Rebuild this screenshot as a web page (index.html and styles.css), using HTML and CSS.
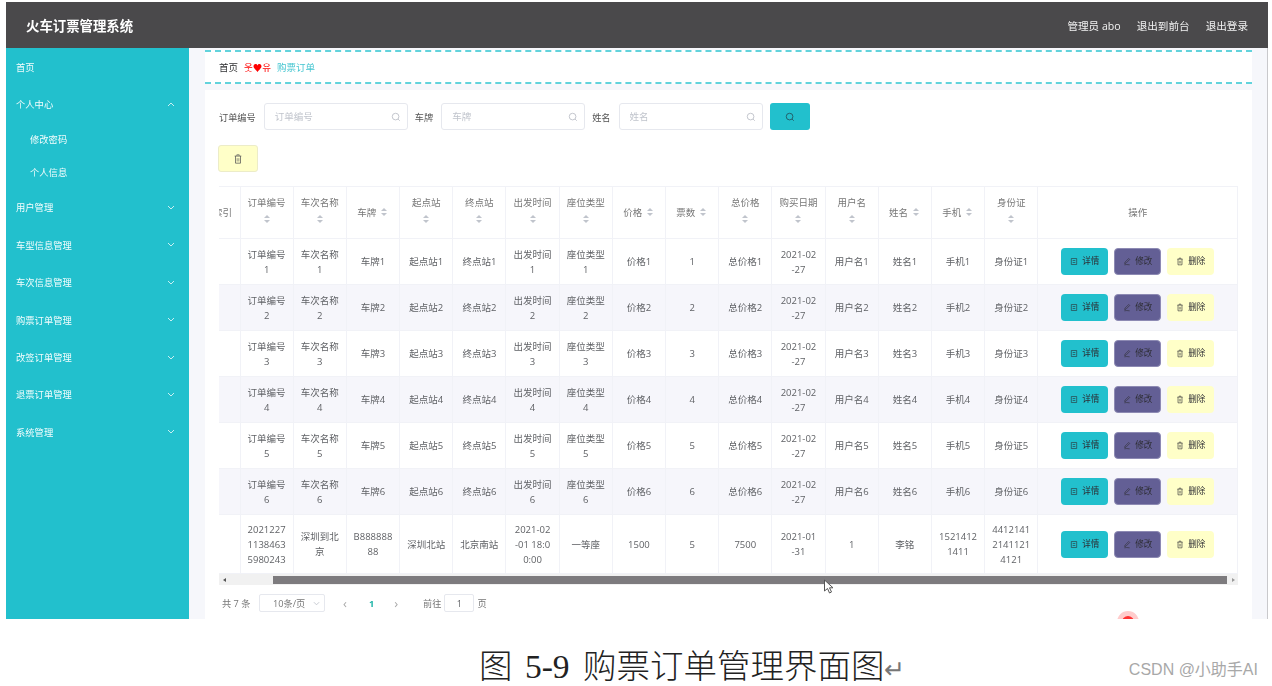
FILE: index.html
```html
<!DOCTYPE html>
<html>
<head>
    <title>火车订票管理系统</title>
    <link rel="stylesheet" href="styles.css">
</head>
<body>

<svg class="icon-defs" width="0" height="0">
    <symbol id="i-search" viewBox="0 0 12 12"><circle cx="5.5" cy="5.5" r="4" fill="none" stroke="currentColor"/><path d="M8.5 8.5L10.5 10.5" stroke="currentColor" fill="none"/></symbol>
    <symbol id="i-trash" viewBox="0 0 12 12"><path d="M4.5 2V1h3v1M2 2.500h8M3 2.500v8.500h6V2.500" stroke="currentColor" stroke-width=".9" fill="none"/><path d="M5 5v4M7 5v4" stroke="currentColor" stroke-width=".7" fill="none"/></symbol>
    <symbol id="i-doc" viewBox="0 0 12 12"><path d="M2 1.500h8v9H2zM4 4.500h4M4 7.500h4" stroke="currentColor" stroke-width=".9" fill="none"/></symbol>
    <symbol id="i-edit" viewBox="0 0 12 12"><path d="M8.500 1.500L10 3L4.500 8.500L2.500 9L3 7zM2 11c2-.6 5-.6 8 0" stroke="currentColor" stroke-width=".9" fill="none"/></symbol>
    <symbol id="i-down" viewBox="0 0 8 5"><path d="M1 1l3 3 3-3" stroke="currentColor" fill="none"/></symbol>
    <symbol id="i-up" viewBox="0 0 8 5"><path d="M1 4l3-3 3 3" stroke="currentColor" fill="none"/></symbol>
</svg>

<div class="screen">
    <header class="topbar">
        <div class="title">火车订票管理系统</div>
        <div class="top-links">
            <span>管理员 abo</span>
            <span>退出到前台</span>
            <span>退出登录</span>
        </div>
    </header>

    <div class="layout">
        <nav class="sidebar">
            <div class="menu-item">首页</div>
            <div class="menu-item">个人中心<svg class="chev"><use href="#i-up"/></svg></div>
            <div class="menu-sub">修改密码</div>
            <div class="menu-sub">个人信息</div>
            <div class="menu-item">用户管理<svg class="chev"><use href="#i-down"/></svg></div>
            <div class="menu-item">车型信息管理<svg class="chev"><use href="#i-down"/></svg></div>
            <div class="menu-item">车次信息管理<svg class="chev"><use href="#i-down"/></svg></div>
            <div class="menu-item">购票订单管理<svg class="chev"><use href="#i-down"/></svg></div>
            <div class="menu-item">改签订单管理<svg class="chev"><use href="#i-down"/></svg></div>
            <div class="menu-item">退票订单管理<svg class="chev"><use href="#i-down"/></svg></div>
            <div class="menu-item">系统管理<svg class="chev"><use href="#i-down"/></svg></div>
        </nav>

        <main class="main">
            <div class="breadcrumb">
                <span class="crumb-home">首页</span>
                <span class="crumb-sep">웃♥유</span>
                <span class="crumb-current">购票订单</span>
            </div>

            <div class="panel">
                <div class="search-row">
                    <label class="search-label">订单编号</label>
                    <div class="search-box"><input type="text" placeholder="订单编号"><svg class="search-icon"><use href="#i-search"/></svg></div>
                    <label class="search-label">车牌</label>
                    <div class="search-box"><input type="text" placeholder="车牌"><svg class="search-icon"><use href="#i-search"/></svg></div>
                    <label class="search-label">姓名</label>
                    <div class="search-box"><input type="text" placeholder="姓名"><svg class="search-icon"><use href="#i-search"/></svg></div>
                    <button class="search-btn"><svg class="btn-icon"><use href="#i-search"/></svg></button>
                </div>

                <button class="bulk-delete"><svg class="btn-icon"><use href="#i-trash"/></svg></button>

                <table class="orders">
                    <colgroup>
                        <col class="col-index">
                        <col span="15" class="col-data">
                        <col class="col-actions">
                    </colgroup>
                    <thead>
                        <tr>
                            <th class="index-cell"><span>索引</span></th>
                            <th>订单编号 <i class="caret"></i></th>
                            <th>车次名称 <i class="caret"></i></th>
                            <th>车牌 <i class="caret"></i></th>
                            <th>起点站 <i class="caret"></i></th>
                            <th>终点站 <i class="caret"></i></th>
                            <th>出发时间 <i class="caret"></i></th>
                            <th>座位类型 <i class="caret"></i></th>
                            <th>价格 <i class="caret"></i></th>
                            <th>票数 <i class="caret"></i></th>
                            <th>总价格 <i class="caret"></i></th>
                            <th>购买日期 <i class="caret"></i></th>
                            <th>用户名 <i class="caret"></i></th>
                            <th>姓名 <i class="caret"></i></th>
                            <th>手机 <i class="caret"></i></th>
                            <th>身份证 <i class="caret"></i></th>
                            <th>操作</th>
                        </tr>
                    </thead>
                    <tbody>
                        <tr>
                            <td></td><td>订单编号 1</td><td>车次名称 1</td><td>车牌1</td><td>起点站1</td><td>终点站1</td><td>出发时间 1</td><td>座位类型 1</td><td>价格1</td><td>1</td><td>总价格1</td><td>2021-02<br>-27</td><td>用户名1</td><td>姓名1</td><td>手机1</td><td>身份证1</td>
                            <td><div class="actions"><button class="act act-view"><svg class="act-icon"><use href="#i-doc"/></svg>详情</button><button class="act act-edit"><svg class="act-icon"><use href="#i-edit"/></svg>修改</button><button class="act act-del"><svg class="act-icon"><use href="#i-trash"/></svg>删除</button></div></td>
                        </tr>
                        <tr>
                            <td></td><td>订单编号 2</td><td>车次名称 2</td><td>车牌2</td><td>起点站2</td><td>终点站2</td><td>出发时间 2</td><td>座位类型 2</td><td>价格2</td><td>2</td><td>总价格2</td><td>2021-02<br>-27</td><td>用户名2</td><td>姓名2</td><td>手机2</td><td>身份证2</td>
                            <td><div class="actions"><button class="act act-view"><svg class="act-icon"><use href="#i-doc"/></svg>详情</button><button class="act act-edit"><svg class="act-icon"><use href="#i-edit"/></svg>修改</button><button class="act act-del"><svg class="act-icon"><use href="#i-trash"/></svg>删除</button></div></td>
                        </tr>
                        <tr>
                            <td></td><td>订单编号 3</td><td>车次名称 3</td><td>车牌3</td><td>起点站3</td><td>终点站3</td><td>出发时间 3</td><td>座位类型 3</td><td>价格3</td><td>3</td><td>总价格3</td><td>2021-02<br>-27</td><td>用户名3</td><td>姓名3</td><td>手机3</td><td>身份证3</td>
                            <td><div class="actions"><button class="act act-view"><svg class="act-icon"><use href="#i-doc"/></svg>详情</button><button class="act act-edit"><svg class="act-icon"><use href="#i-edit"/></svg>修改</button><button class="act act-del"><svg class="act-icon"><use href="#i-trash"/></svg>删除</button></div></td>
                        </tr>
                        <tr>
                            <td></td><td>订单编号 4</td><td>车次名称 4</td><td>车牌4</td><td>起点站4</td><td>终点站4</td><td>出发时间 4</td><td>座位类型 4</td><td>价格4</td><td>4</td><td>总价格4</td><td>2021-02<br>-27</td><td>用户名4</td><td>姓名4</td><td>手机4</td><td>身份证4</td>
                            <td><div class="actions"><button class="act act-view"><svg class="act-icon"><use href="#i-doc"/></svg>详情</button><button class="act act-edit"><svg class="act-icon"><use href="#i-edit"/></svg>修改</button><button class="act act-del"><svg class="act-icon"><use href="#i-trash"/></svg>删除</button></div></td>
                        </tr>
                        <tr>
                            <td></td><td>订单编号 5</td><td>车次名称 5</td><td>车牌5</td><td>起点站5</td><td>终点站5</td><td>出发时间 5</td><td>座位类型 5</td><td>价格5</td><td>5</td><td>总价格5</td><td>2021-02<br>-27</td><td>用户名5</td><td>姓名5</td><td>手机5</td><td>身份证5</td>
                            <td><div class="actions"><button class="act act-view"><svg class="act-icon"><use href="#i-doc"/></svg>详情</button><button class="act act-edit"><svg class="act-icon"><use href="#i-edit"/></svg>修改</button><button class="act act-del"><svg class="act-icon"><use href="#i-trash"/></svg>删除</button></div></td>
                        </tr>
                        <tr>
                            <td></td><td>订单编号 6</td><td>车次名称 6</td><td>车牌6</td><td>起点站6</td><td>终点站6</td><td>出发时间 6</td><td>座位类型 6</td><td>价格6</td><td>6</td><td>总价格6</td><td>2021-02<br>-27</td><td>用户名6</td><td>姓名6</td><td>手机6</td><td>身份证6</td>
                            <td><div class="actions"><button class="act act-view"><svg class="act-icon"><use href="#i-doc"/></svg>详情</button><button class="act act-edit"><svg class="act-icon"><use href="#i-edit"/></svg>修改</button><button class="act act-del"><svg class="act-icon"><use href="#i-trash"/></svg>删除</button></div></td>
                        </tr>
                        <tr class="row-tall">
                            <td></td><td>20212271138463 5980243</td><td>深圳到北京</td><td>B88888888</td><td>深圳北站</td><td>北京南站</td><td>2021-02<br>-01 18:0<br>0:00</td><td>一等座</td><td>1500</td><td>5</td><td>7500</td><td>2021-01<br>-31</td><td>1</td><td>李铭</td><td>15214121411</td><td>441214121411214121</td>
                            <td><div class="actions"><button class="act act-view"><svg class="act-icon"><use href="#i-doc"/></svg>详情</button><button class="act act-edit"><svg class="act-icon"><use href="#i-edit"/></svg>修改</button><button class="act act-del"><svg class="act-icon"><use href="#i-trash"/></svg>删除</button></div></td>
                        </tr>
                    </tbody>
                </table>

                <div class="scrollbar">
                    <span class="scroll-left"></span>
                    <span class="scroll-thumb"></span>
                    <span class="scroll-right"></span>
                </div>

                <div class="pager">
                    <span class="pager-total">共 7 条</span>
                    <div class="pager-size">10条/页<svg class="pager-chev"><use href="#i-down"/></svg></div>
                    <span class="pager-prev">‹</span>
                    <span class="pager-num">1</span>
                    <span class="pager-next">›</span>
                    <span class="pager-goto">前往</span>
                    <input class="pager-input" type="text" value="1">
                    <span>页</span>
                </div>
            </div>
        </main>
    </div>

    <span class="rec-dot"></span>
    <svg class="cursor" width="12" height="16" viewBox="0 0 12 16"><path d="M1.500 1v11l3-2.500 2 4.500 2-1-2-4.200h3.500z" fill="#fff" stroke="#555"/></svg>
</div>

<footer class="caption-row">
    <div class="caption">图 <span class="caption-no">5-9</span> 购票订单管理界面图<span class="return-mark">↵</span></div>
    <div class="watermark">CSDN @小助手AI</div>
</footer>

</body>
</html>
```

FILE: styles.css
```css
body { margin: 0; background: #fff; font-family: "Open Sans", "Noto Sans CJK SC", "Noto Sans CJK KR", sans-serif; font-size: 9.5px; color: #606266; }
.icon-defs { display: block; height: 0; }

.screen { position: relative; width: 1262px; height: 617px; margin: 2px 0 0 6px; overflow: hidden; filter: blur(0.55px); }

.topbar { display: flex; justify-content: space-between; align-items: center; height: 46px; padding: 0 20px; background: #4a494b; color: #f2f2f2; }
.title { font-size: 13.4px; font-weight: 700; color: #fff; }
.top-links { display: flex; gap: 16px; font-size: 10.6px; }

.layout { display: flex; height: 571px; }

.sidebar { width: 183px; flex: none; background: #22c0cd; color: #f4fdfd; font-size: 9.3px; }
.menu-item { display: flex; justify-content: space-between; align-items: center; height: 37.4px; padding: 0 14px 0 10px; }
.menu-sub { display: flex; align-items: center; height: 33px; padding-left: 24px; }
.chev { width: 8px; height: 5px; color: #c9eff2; }

.main { flex: 1; min-width: 0; padding: 0 15px 0 16px; background: #f6f7fb; border-right: 1px solid #c9c9cc; }
.breadcrumb { display: flex; align-items: center; gap: 6px; height: 34px; margin-top: 2px; padding-left: 14px; box-sizing: border-box; background: #fff; border-top: 2px dashed #62d3dc; border-bottom: 2px dashed #62d3dc; }
.crumb-home { color: #303133; }
.crumb-sep { color: #f00; }
.crumb-current { color: #45c6d1; }

.panel { height: 529px; margin-top: 6px; padding: 13px 14px 0; box-sizing: border-box; background: #fff; }

.search-row { display: flex; align-items: center; height: 27px; }
.search-label { margin-right: 8px; font-size: 9.2px; color: #555; }
.search-box { display: flex; align-items: center; width: 144px; height: 27px; margin-right: 7px; padding: 0 6px 0 10px; box-sizing: border-box; border: 1px solid #e6e8ee; border-radius: 3px; }
.search-box input { flex: 1; min-width: 0; border: 0; padding: 0; outline: 0; font: inherit; }
.search-box input::placeholder { color: #c0c4cc; }
.search-icon { width: 10px; height: 10px; color: #b8bcc4; }
.search-btn { display: flex; justify-content: center; align-items: center; width: 40px; height: 27px; padding: 0; background: #22c0cd; border: 0; border-radius: 3px; color: #22505a; }
.btn-icon { width: 10px; height: 10px; }

.bulk-delete { display: flex; justify-content: center; align-items: center; width: 40px; height: 27px; margin: 15px 0 14px -1px; padding: 0; background: #ffffc8; border: 1px solid #ececc8; border-radius: 3px; color: #555; }

.orders { width: 1019px; table-layout: fixed; border-collapse: collapse; }
.col-index { width: 21px; }
.col-data { width: 53.2px; }
.col-actions { width: 200px; }
.orders th, .orders td { padding: 0 6.5px; border: 1px solid #f1f2f7; border-left: 0; text-align: center; word-break: break-all; line-height: 15px; font-weight: 400; overflow: hidden; }
.orders th { height: 52px; box-sizing: border-box; color: #777; }
.orders td { height: 46px; box-sizing: border-box; }
.orders tbody tr:nth-child(even) td { background: #f6f6fb; }
.orders .row-tall td { height: 59px; }
.orders th.index-cell { padding: 0; text-align: left; }
.index-cell span { display: block; margin-left: -6px; white-space: nowrap; }

.caret { position: relative; display: inline-block; width: 10px; height: 20px; vertical-align: middle; }
.caret::before, .caret::after { content: ""; position: absolute; left: 2px; border-left: 3px solid transparent; border-right: 3px solid transparent; }
.caret::before { top: 5px; border-bottom: 3.500px solid #c0c4cc; }
.caret::after { top: 10px; border-top: 3.500px solid #c0c4cc; }

.actions { display: flex; justify-content: center; gap: 6px; }
.act { display: flex; justify-content: center; align-items: center; gap: 4px; width: 47px; height: 27px; padding: 0; border: 1px solid transparent; border-radius: 4px; font: inherit; font-size: 8.6px; color: #2d2d33; }
.act-icon { width: 8px; height: 9px; }
.act-view { background: #22c0cd; }
.act-edit { background: #635f95; border-color: #8d8ab3; }
.act-del { background: #ffffc8; }

.scrollbar { display: flex; align-items: center; width: 1019px; height: 11px; background: #f1f1f1; }
.scroll-left { width: 54px; height: 9px; flex: none; position: relative; }
.scroll-left::before { content: ""; position: absolute; left: 4px; top: 2.5px; border-top: 2px solid transparent; border-bottom: 2px solid transparent; border-right: 3px solid #555; }
.scroll-thumb { flex: 1; height: 8px; background: #7d7b7e; }
.scroll-right { width: 11px; height: 9px; flex: none; position: relative; }
.scroll-right::before { content: ""; position: absolute; left: 5px; top: 2.5px; border-top: 2px solid transparent; border-bottom: 2px solid transparent; border-left: 3px solid #999; }

.pager { display: flex; align-items: center; height: 18px; margin-top: 9px; padding-left: 3px; font-size: 9.2px; color: #777; }
.pager-total { width: 37px; }
.pager-size { display: flex; justify-content: space-between; align-items: center; width: 66px; height: 18px; padding: 0 4px 0 13px; box-sizing: border-box; border: 1px solid #e6e8ee; border-radius: 2px; }
.pager-chev { width: 7px; height: 5px; color: #c0c4cc; }
.pager-prev { margin-left: 18px; font-size: 13px; color: #aaa; }
.pager-num { margin-left: 22px; font-weight: 700; color: #1fb5a8; }
.pager-next { margin-left: 20px; font-size: 13px; color: #aaa; }
.pager-goto { margin-left: 25px; margin-right: 3px; }
.pager-input { width: 30px; height: 18px; margin-right: 3px; padding: 0; box-sizing: border-box; border: 1px solid #e6e8ee; border-radius: 2px; text-align: center; font: inherit; color: #606266; }

.rec-dot { position: absolute; left: 1111px; top: 609px; width: 12px; height: 12px; background: #f33; border: 5px solid #fcc; border-radius: 50%; }
.cursor { position: absolute; left: 817px; top: 577px; }

.caption-row { display: flex; justify-content: space-between; align-items: center; height: 67px; padding: 22px 14px 0 479px; box-sizing: border-box; }
.caption { font-family: "Liberation Serif", "Noto Sans CJK SC", serif; font-size: 33.500px; font-weight: 300; color: #222; white-space: nowrap; }
.caption-no { margin: 0 5px 0 4px; }
.return-mark { color: #777; font-family: "DejaVu Sans", sans-serif; font-size: 25px; }
.watermark { margin-top: 9px; font-family: "Liberation Sans", "Noto Sans CJK SC", sans-serif; font-size: 16px; color: #a8a8a8; }
```
